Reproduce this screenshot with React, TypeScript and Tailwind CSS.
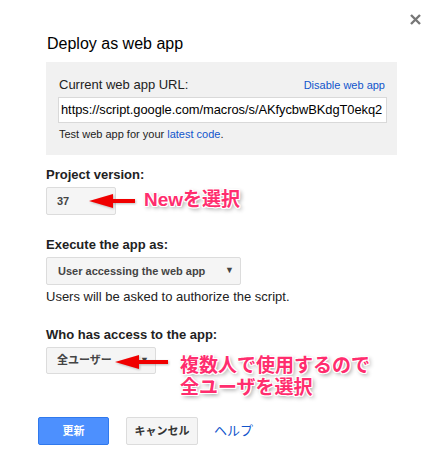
import React from "react";

const pinkText: React.CSSProperties = {
  color: "#ff2d6e",
  textShadow:
    "1px 0 0 #fff, -1px 0 0 #fff, 0 1px 0 #fff, 0 -1px 0 #fff, 1px 1px 0 #fff, -1px -1px 0 #fff, 1px -1px 0 #fff, -1px 1px 0 #fff, 2px 2px 4px rgba(0,0,0,0.45)",
};

function Arrow({ width }: { width: number }) {
  return (
    <svg width={width} height={16} viewBox={`0 0 ${width} 16`} style={{ filter: "drop-shadow(1px 1px 1px rgba(0,0,0,0.25))" }}>
      <rect x={20} y={6} width={width - 20} height={4} fill="#f00000" />
      <polygon points="0,8 24,1 24,15" fill="#f00000" />
    </svg>
  );
}

function Caret() {
  return <span className="text-[9px] text-[#444]">▼</span>;
}

export default function App() {
  return (
    <div
      className="relative w-[441px] h-[468px] bg-white text-[#222]"
      style={{ fontFamily: '"Liberation Sans", Arial, "Noto Sans CJK JP", sans-serif' }}
    >
      {/* close button */}
      <svg className="absolute left-[410px] top-[14px]" width="11" height="11" viewBox="0 0 11 11">
        <path d="M1 1 L10 10 M10 1 L1 10" stroke="#777" strokeWidth="2.4" />
      </svg>

      <div className="pl-[46px] pt-[34px] w-[397px]">
        <div className="text-[16px] leading-[20px] pl-[1px] text-black">Deploy as web app</div>

        <div className="mt-[8px] bg-[#f1f1f1] pl-[12px] pr-[10px] pt-[15px] pb-[14px]">
          <div className="flex items-center justify-between h-[16px] pr-[2px]">
            <span className="text-[13px] pl-[1px]">Current web app URL:</span>
            <span className="text-[11px] text-[#15c]">Disable web app</span>
          </div>
          <div className="mt-[4px] h-[26px] bg-white border border-[#d9d9d9] overflow-hidden whitespace-nowrap pl-[2px] text-[12.9px] tracking-[-0.05px] leading-[24px] text-black">
            https://script.google.com/macros/s/AKfycbwBKdgT0ekq2
          </div>
          <div className="mt-[4px] text-[11px] leading-[14px] pl-[1px]">
            Test web app for your <span className="text-[#15c]">latest code</span>.
          </div>
        </div>

        <div className="mt-[12px] text-[13px] leading-[16px] font-bold">Project version:</div>
        <div className="mt-[4px] w-[70px] h-[28px] bg-[#f5f5f5] border border-[#dcdcdc] rounded-[2px] flex items-center pl-[10px] text-[11px] font-bold text-[#444]">
          37
        </div>

        <div className="mt-[22px] text-[13px] leading-[16px] font-bold">Execute the app as:</div>
        <div className="mt-[4px] w-[195px] h-[28px] bg-[#f5f5f5] border border-[#dcdcdc] rounded-[2px] flex items-center justify-between pl-[11px] pr-[6px] text-[11px] font-bold text-[#444]">
          <span>User accessing the web app</span>
          <Caret />
        </div>
        <div className="mt-[4px] text-[13px] leading-[16px]">Users will be asked to authorize the script.</div>

        <div className="mt-[22px] text-[13px] leading-[16px] font-bold">Who has access to the app:</div>
        <div className="mt-[4px] w-[110px] h-[27px] bg-[#f5f5f5] border border-[#dcdcdc] rounded-[2px] flex items-center justify-between pl-[10px] pr-[6px] text-[11px] font-bold text-[#444]">
          <span>全ユーザー</span>
          <Caret />
        </div>

        <div className="mt-[43px] -ml-[8px] flex items-center gap-[17px]">
          <div className="w-[71px] h-[28px] bg-[#4d90fe] border border-[#3079ed] rounded-[2px] flex items-center justify-center text-[11px] font-bold text-white">
            更新
          </div>
          <div className="w-[72px] h-[28px] bg-[#f5f5f5] border border-[#dcdcdc] rounded-[2px] flex items-center justify-center text-[11px] font-bold text-[#333]">
            キャンセル
          </div>
          <span className="text-[13px] text-[#15c] -ml-[1px]">ヘルプ</span>
        </div>
      </div>

      {/* annotations */}
      <div className="absolute left-[89px] top-[193px]">
        <Arrow width={46} />
      </div>
      <div
        className="absolute left-[144px] top-[188px] text-[19px] leading-[24px] font-bold whitespace-nowrap"
        style={pinkText}
      >
        Newを選択
      </div>

      <div className="absolute left-[115px] top-[354px]">
        <Arrow width={53} />
      </div>
      <div
        className="absolute left-[180px] top-[355px] text-[19px] leading-[22px] font-bold whitespace-nowrap"
        style={pinkText}
      >
        <div>複数人で使用するので</div>
        <div>全ユーザを選択</div>
      </div>
    </div>
  );
}
